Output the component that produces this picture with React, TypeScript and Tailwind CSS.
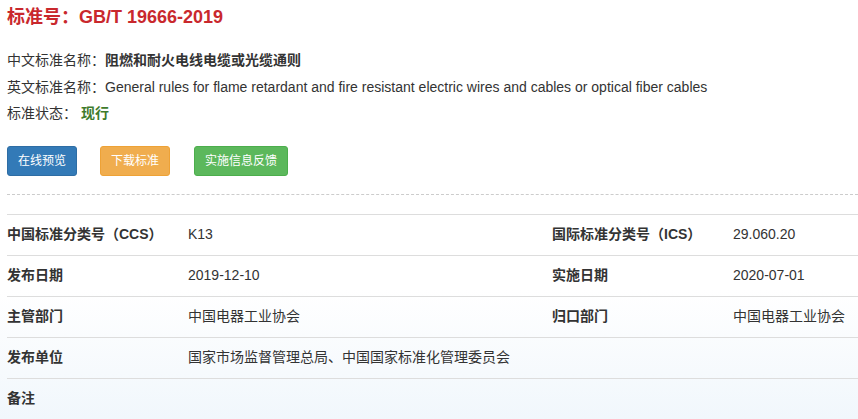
import React from 'react';

const rows: [string, string, string?, string?][] = [
  ['中国标准分类号（CCS）', 'K13', '国际标准分类号（ICS）', '29.060.20'],
  ['发布日期', '2019-12-10', '实施日期', '2020-07-01'],
  ['主管部门', '中国电器工业协会', '归口部门', '中国电器工业协会'],
  ['发布单位', '国家市场监督管理总局、中国国家标准化管理委员会'],
  ['备注', ''],
];

const App: React.FC = () => {
  return (
    <div
      className="h-[419px] w-[858px] overflow-hidden bg-[linear-gradient(to_bottom,#ffffff_0px,#ffffff_290px,#f1f7fc_419px)] pl-[7px] text-[14px] text-[#333] [font-family:'Liberation_Sans','Noto_Sans_CJK_SC',sans-serif]"
    >
      {/* Title */}
      <h1 className="pt-[6px] text-[18px] font-bold leading-[22px] text-[#c9282d]">
        标准号：GB/T 19666-2019
      </h1>

      {/* Names + status */}
      <div className="mt-[19px] leading-[26.5px]">
        <div className="flex">
          <span>中文标准名称：</span>
          <span className="font-bold">阻燃和耐火电线电缆或光缆通则</span>
        </div>
        <div className="flex">
          <span>英文标准名称：</span>
          <span>General rules for flame retardant and fire resistant electric wires and cables or optical fiber cables</span>
        </div>
        <div className="flex">
          <span>标准状态：</span>
          <span className="ml-[4px] font-bold text-[#3e7b2c]">现行</span>
        </div>
      </div>

      {/* Buttons */}
      <div className="mt-[19px] flex">
        <button className="h-[30px] rounded-[3px] border border-[#2e6da4] bg-[#337ab7] px-[10px] text-[12px] text-white">在线预览</button>
        <button className="ml-[23px] h-[30px] rounded-[3px] border border-[#eea236] bg-[#f0ad4e] px-[10px] text-[12px] text-white">下载标准</button>
        <button className="ml-[24px] h-[30px] rounded-[3px] border border-[#4cae4c] bg-[#5cb85c] px-[10px] text-[12px] text-white">实施信息反馈</button>
      </div>

      <div className="mt-[18px] border-t border-dashed border-[#cccccc]" />

      {/* Info table */}
      <div className="mt-[19px] border-t border-[#dddddd]">
        {rows.map(([l1, v1, l2, v2], i) => (
          <div key={i} className="grid h-[41px] grid-cols-[181px_364px_181px_1fr] items-center border-b border-[#dddddd]">
            <span className="font-bold">{l1}</span>
            <span>{v1}</span>
            <span className="font-bold">{l2 ?? ''}</span>
            <span>{v2 ?? ''}</span>
          </div>
        ))}
      </div>
    </div>
  );
};

export default App;
